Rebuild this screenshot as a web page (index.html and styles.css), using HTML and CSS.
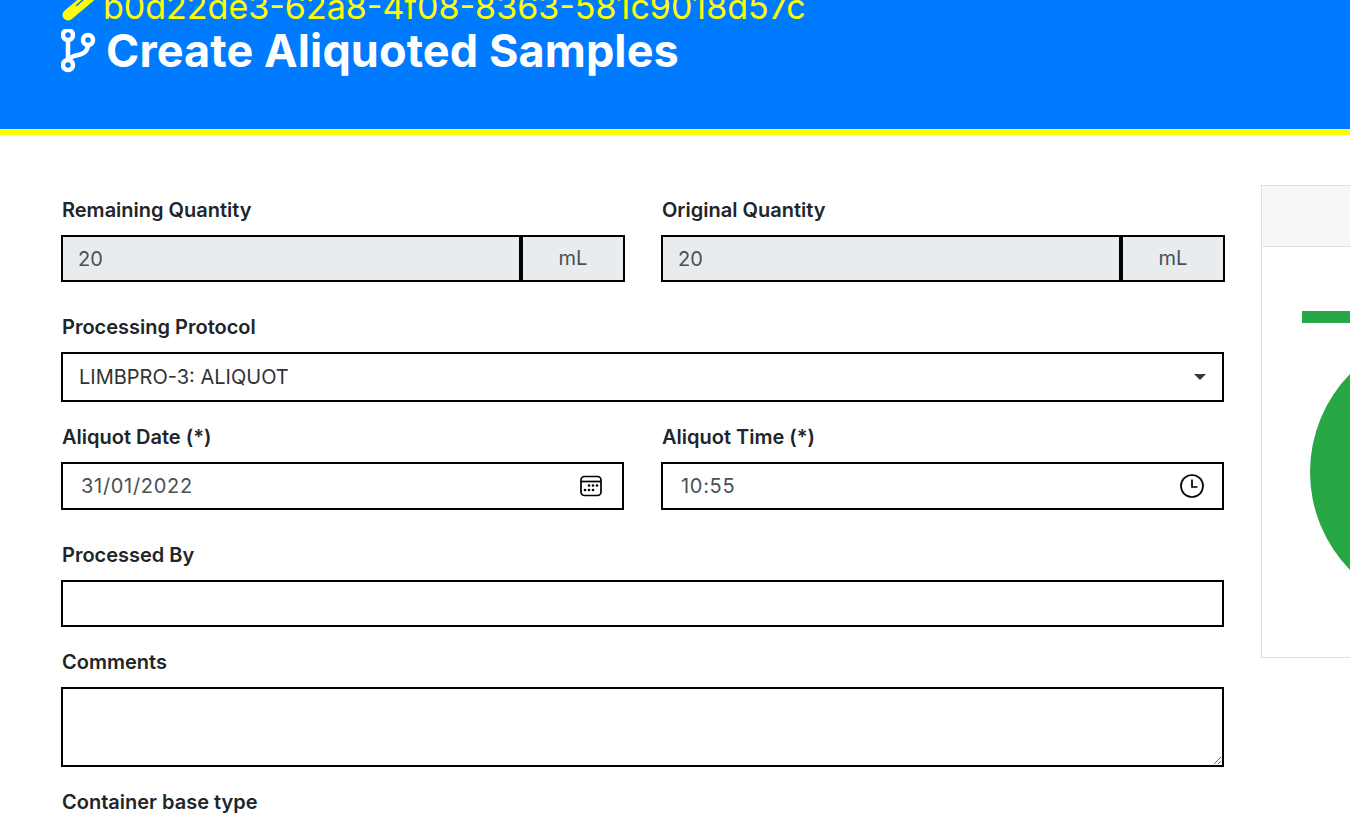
FILE: index.html
```html
<!DOCTYPE html>
<html lang="en">

<head>
    <meta charset="UTF-8">
    <meta name="viewport" content="width=device-width, initial-scale=1.0">
    <title>Create Aliquoted Samples</title>
    <link rel="stylesheet" href="styles.css">
</head>

<body>
    <header class="banner">
        <div class="banner-inner">
            <div class="sample-id">
                <svg class="sample-icon" viewBox="0 -1 36 36" width="36" height="36">
                    <path stroke="#ffff00" stroke-width="11" stroke-linecap="round" d="M7 25 L32 4"/>
                    <path stroke="#007bff" stroke-width="1.500" d="M15 16 L23 9"/>
                </svg>
                <span>b0d22de3-62a8-4f08-8363-581c9018d57c</span>
            </div>
            <h1 class="page-title">
                <svg class="fork-icon" viewBox="0 1 36 44" width="36" height="44" fill="none" stroke="#ffffff" stroke-width="4.500">
                    <circle cx="7" cy="7" r="5"/>
                    <circle cx="7" cy="37" r="5"/>
                    <circle cx="27" cy="12" r="5"/>
                    <path d="M7 11 V33 M27 16 C27 24 22 26 17 27 C12 28 9 29 7 33"/>
                </svg>
                <span>Create Aliquoted Samples</span>
            </h1>
        </div>
    </header>

    <div class="content">
        <form class="sample-form">
            <div class="row row-first">
                <div class="field">
                    <label>Remaining Quantity</label>
                    <div class="input-group">
                        <input class="control locked" type="text" value="20" disabled>
                        <span class="unit">mL</span>
                    </div>
                </div>
                <div class="field">
                    <label>Original Quantity</label>
                    <div class="input-group">
                        <input class="control locked" type="text" value="20" disabled>
                        <span class="unit">mL</span>
                    </div>
                </div>
            </div>

            <div class="field field-protocol">
                <label>Processing Protocol</label>
                <div class="select-box">
                    <select>
                        <option>LIMBPRO-3: ALIQUOT</option>
                    </select>
                    <svg class="caret" viewBox="0 0 12 6" width="12" height="6"><path fill="#343a40" d="M0 0 H12 L6 6 Z"/></svg>
                </div>
            </div>

            <div class="row row-when">
                <div class="field">
                    <label>Aliquot Date (*)</label>
                    <div class="icon-box">
                        <input type="text" value="31/01/2022">
                        <svg class="cal-icon" viewBox="0 0 22 22" width="22" height="22" fill="none" stroke="#000000" stroke-width="1.700">
                            <rect x="1" y="1.500" width="20" height="19" rx="3.500"/>
                            <path d="M1 6.500 H21"/>
                            <g fill="#000000" stroke="none">
                                <circle cx="9" cy="10.500" r="1.300"/><circle cx="13" cy="10.500" r="1.300"/><circle cx="17" cy="10.500" r="1.300"/>
                                <circle cx="5" cy="15" r="1.300"/><circle cx="9" cy="15" r="1.300"/><circle cx="13" cy="15" r="1.300"/>
                            </g>
                        </svg>
                    </div>
                </div>
                <div class="field">
                    <label>Aliquot Time (*)</label>
                    <div class="icon-box">
                        <input type="text" value="10:55">
                        <svg viewBox="0 0 24 24" width="24" height="24" fill="none" stroke="#000000" stroke-width="1.700">
                            <circle cx="12" cy="12" r="11"/>
                            <path d="M12 5.500 V13 H17.500"/>
                        </svg>
                    </div>
                </div>
            </div>

            <div class="field field-by">
                <label>Processed By</label>
                <input class="control" type="text">
            </div>

            <div class="field field-comments">
                <label>Comments</label>
                <textarea class="control comments"></textarea>
            </div>

            <div class="field field-container">
                <label>Container base type</label>
            </div>
        </form>

        <aside class="card">
            <div class="card-head"></div>
            <div class="card-body">
                <div class="green-bar"></div>
                <div class="green-circle"></div>
            </div>
        </aside>
    </div>
</body>
</html>
```

FILE: styles.css
```css
html, body {
    margin: 0;
    height: 816px;
    overflow: hidden;
    background-color: #ffffff;
}
body {
    font-family: Inter, "Liberation Sans", sans-serif;
    color: #212529;
}
.banner {
    height: 129px;
    background-color: #007bff;
    border-bottom: 6px solid #ffff00;
    overflow: hidden;
}
.banner-inner {
    margin-top: -13px;
    padding-left: 61px;
}
.sample-id {
    display: flex;
    align-items: center;
    gap: 6px;
    height: 40px;
    font-size: 34px;
    line-height: 40px;
    color: #ffff00;
}
.sample-icon {
    flex: none;
}
.page-title {
    display: flex;
    align-items: center;
    gap: 9px;
    margin: 0;
    height: 48px;
    font-size: 45px;
    line-height: 48px;
    font-weight: 700;
    letter-spacing: 0.1px;
    color: #ffffff;
}
.fork-icon {
    flex: none;
}
.content {
    display: flex;
    gap: 36px;
    padding: 50px 0 0 61px;
    width: 1700px;
}
.sample-form {
    flex: none;
    width: 1164px;
}
.row {
    display: grid;
    grid-template-columns: 564px 564px;
    gap: 36px;
}
.field label {
    display: block;
    height: 24px;
    margin-bottom: 13px;
    padding-left: 1px;
    font-size: 20px;
    line-height: 24px;
    font-weight: 600;
}
.row-first {
    margin-top: 13px;
}
.field-protocol {
    margin-top: 33px;
}
.row-when {
    margin-top: 23px;
}
.field-by {
    margin-top: 33px;
}
.field-comments {
    margin-top: 23px;
}
.field-container {
    margin-top: 23px;
}
.control, .input-group, .select-box, .icon-box {
    box-sizing: border-box;
    width: 100%;
    font-family: inherit;
    font-size: 20px;
    color: #495057;
}
.control {
    display: block;
    height: 47px;
    padding: 0 16px;
    border: 2px solid #000000;
    background-color: #ffffff;
    border-radius: 0;
    outline: none;
}
.field-by .control, .comments, .select-box {
    width: 1163px;
}
.icon-box {
    width: 563px;
}
.locked {
    padding: 0 15px;
    background-color: #e9ecef;
    opacity: 1;
    color: #495057;
}
.input-group {
    display: flex;
}
.input-group .control {
    flex: 1;
    min-width: 0;
}
.unit {
    flex: none;
    box-sizing: border-box;
    width: 104px;
    height: 47px;
    line-height: 43px;
    text-align: center;
    border: 2px solid #000000;
    background-color: #e9ecef;
}
.select-box {
    display: flex;
    align-items: center;
    height: 50px;
    padding-right: 16px;
    border: 2px solid #000000;
}
.select-box select {
    flex: 1;
    height: 100%;
    padding: 0 16px;
    border: none;
    outline: none;
    appearance: none;
    background: transparent;
    font-family: inherit;
    font-size: 20px;
    color: #333333;
}
.icon-box {
    display: flex;
    align-items: center;
    height: 48px;
    padding-right: 18px;
    border: 2px solid #000000;
}
.icon-box input {
    flex: 1;
    min-width: 0;
    height: 100%;
    box-sizing: border-box;
    padding: 0 18px;
    border: none;
    outline: none;
    font-family: inherit;
    font-size: 20px;
    letter-spacing: 0.7px;
    color: #495057;
}
.cal-icon {
    margin-right: 2px;
}
.comments {
    height: 80px;
    padding: 8px 16px;
    resize: vertical;
}
.card {
    flex: none;
    box-sizing: border-box;
    width: 400px;
    height: 473px;
    border: 1px solid #dfdfdf;
}
.card-head {
    height: 60px;
    background-color: #f7f7f7;
    border-bottom: 1px solid #dfdfdf;
}
.card-body {
    padding: 64px 0 0 40px;
}
.green-bar {
    width: 120px;
    height: 12px;
    background-color: #28a745;
}
.green-circle {
    width: 280px;
    height: 280px;
    margin: 9px 0 0 8px;
    border-radius: 50%;
    background-color: #28a745;
}
```
